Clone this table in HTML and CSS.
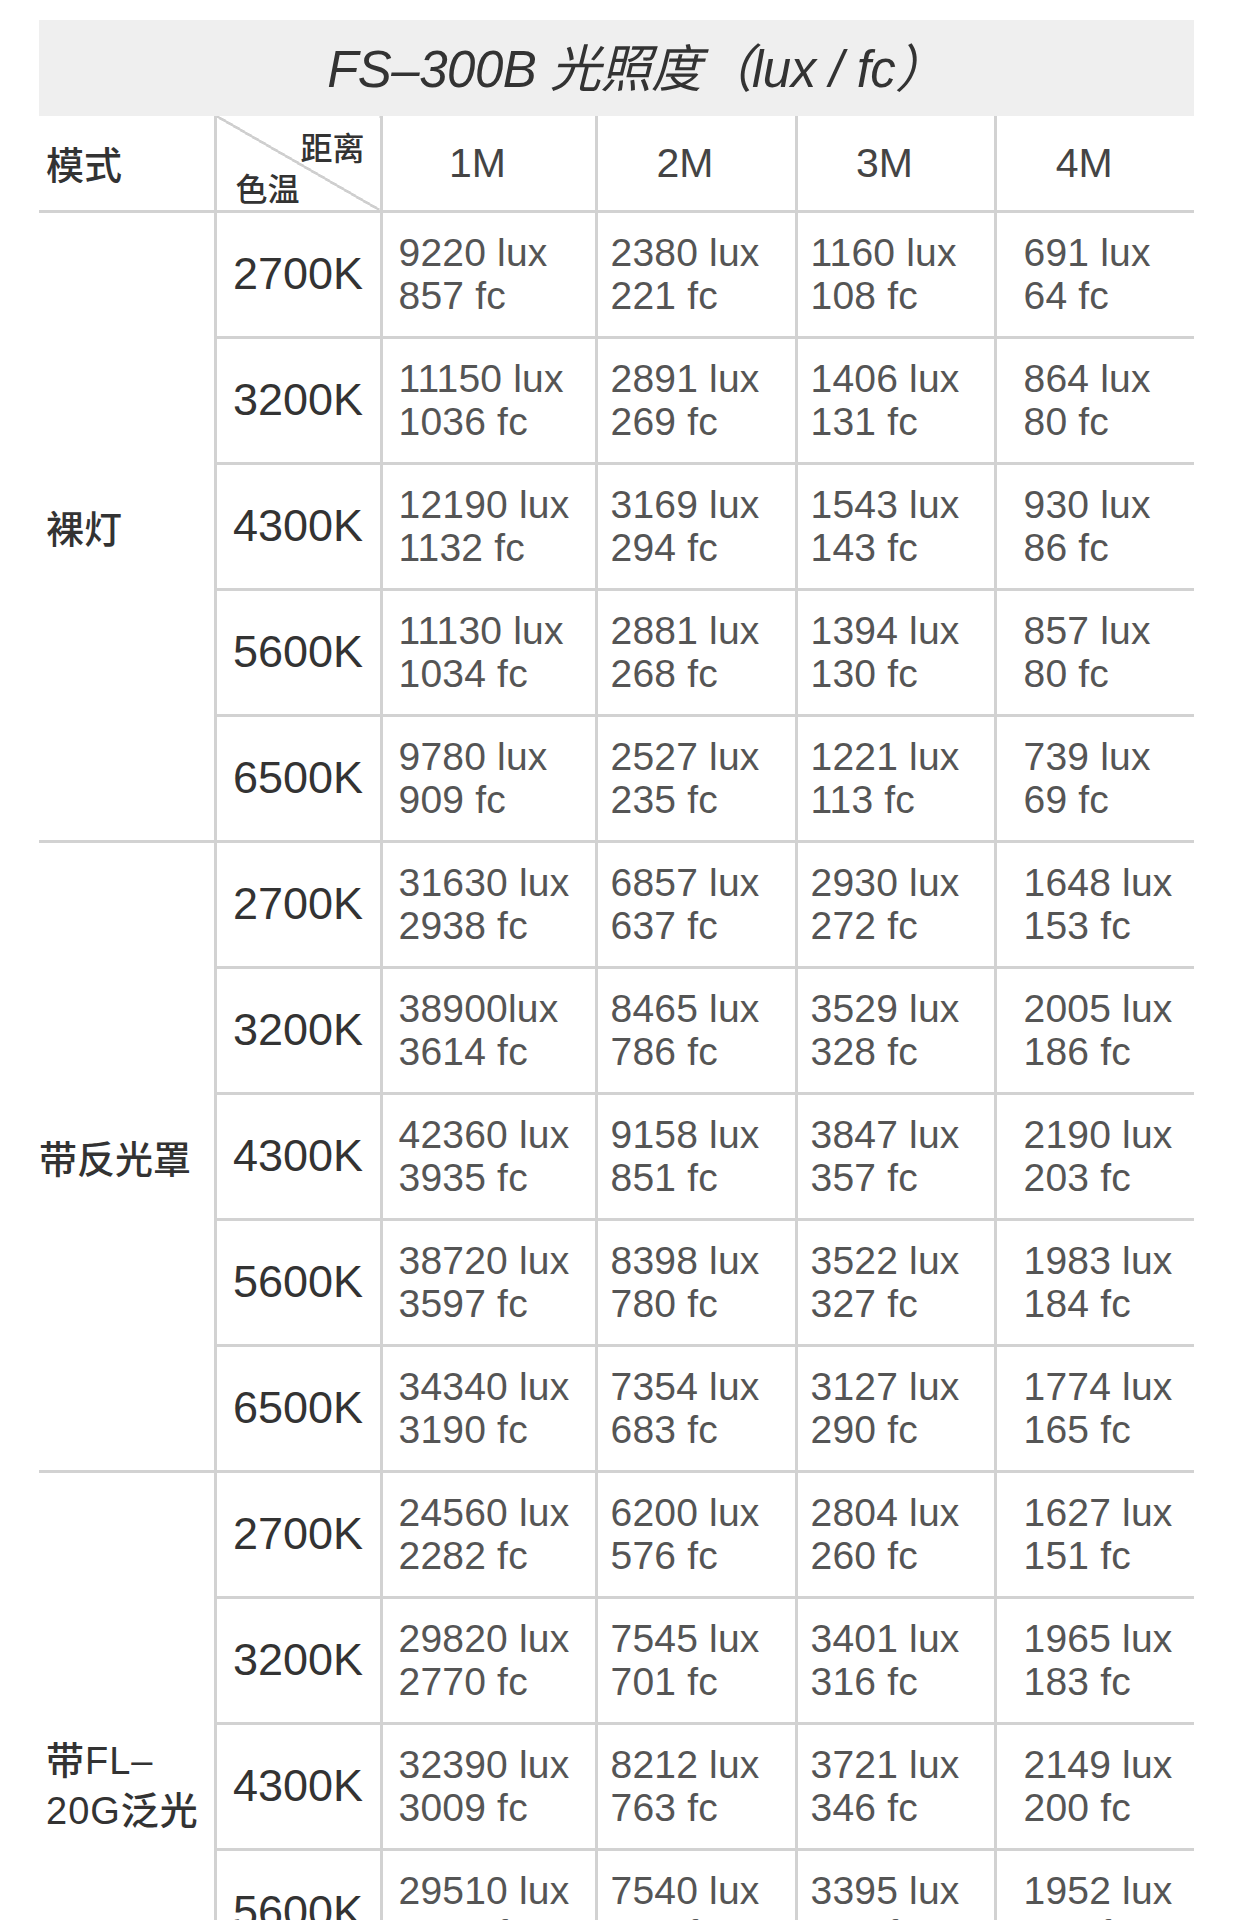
FILE: index.html
```html
<!DOCTYPE html>
<html lang="zh-CN">
<head>
<meta charset="utf-8">
<title>FS-300B 光照度</title>
<link rel="stylesheet" href="styles.css">
</head>
<body>
<div class="sheet">
  <div class="title">FS–300B 光照度（lux / fc）</div>
  <table class="grid">
    <colgroup>
      <col class="w-mode"><col class="w-temp"><col class="w-1"><col class="w-2"><col class="w-3"><col class="w-4">
    </colgroup>
    <thead>
      <tr class="head">
        <th class="mode-h">模式</th>
        <th class="diag"><div class="diag-in"><span class="d-top">距离</span><span class="d-bot">色温</span></div></th>
        <th class="dist">1M</th>
        <th class="dist">2M</th>
        <th class="dist">3M</th>
        <th class="dist">4M</th>
      </tr>
    </thead>
    <tbody>
      <tr class="r">
        <td class="mode" rowspan="5">裸灯</td>
        <td class="temp">2700K</td>
        <td class="v">9220 lux<br>857 fc</td>
        <td class="v">2380 lux<br>221 fc</td>
        <td class="v">1160 lux<br>108 fc</td>
        <td class="v">691 lux<br>64 fc</td>
      </tr>
      <tr class="r">
        <td class="temp">3200K</td>
        <td class="v">11150 lux<br>1036 fc</td>
        <td class="v">2891 lux<br>269 fc</td>
        <td class="v">1406 lux<br>131 fc</td>
        <td class="v">864 lux<br>80 fc</td>
      </tr>
      <tr class="r">
        <td class="temp">4300K</td>
        <td class="v">12190 lux<br>1132 fc</td>
        <td class="v">3169 lux<br>294 fc</td>
        <td class="v">1543 lux<br>143 fc</td>
        <td class="v">930 lux<br>86 fc</td>
      </tr>
      <tr class="r">
        <td class="temp">5600K</td>
        <td class="v">11130 lux<br>1034 fc</td>
        <td class="v">2881 lux<br>268 fc</td>
        <td class="v">1394 lux<br>130 fc</td>
        <td class="v">857 lux<br>80 fc</td>
      </tr>
      <tr class="r">
        <td class="temp">6500K</td>
        <td class="v">9780 lux<br>909 fc</td>
        <td class="v">2527 lux<br>235 fc</td>
        <td class="v">1221 lux<br>113 fc</td>
        <td class="v">739 lux<br>69 fc</td>
      </tr>

      <tr class="r">
        <td class="mode mode-wide" rowspan="5">带反光罩</td>
        <td class="temp">2700K</td>
        <td class="v">31630 lux<br>2938 fc</td>
        <td class="v">6857 lux<br>637 fc</td>
        <td class="v">2930 lux<br>272 fc</td>
        <td class="v">1648 lux<br>153 fc</td>
      </tr>
      <tr class="r">
        <td class="temp">3200K</td>
        <td class="v">38900lux<br>3614 fc</td>
        <td class="v">8465 lux<br>786 fc</td>
        <td class="v">3529 lux<br>328 fc</td>
        <td class="v">2005 lux<br>186 fc</td>
      </tr>
      <tr class="r">
        <td class="temp">4300K</td>
        <td class="v">42360 lux<br>3935 fc</td>
        <td class="v">9158 lux<br>851 fc</td>
        <td class="v">3847 lux<br>357 fc</td>
        <td class="v">2190 lux<br>203 fc</td>
      </tr>
      <tr class="r">
        <td class="temp">5600K</td>
        <td class="v">38720 lux<br>3597 fc</td>
        <td class="v">8398 lux<br>780 fc</td>
        <td class="v">3522 lux<br>327 fc</td>
        <td class="v">1983 lux<br>184 fc</td>
      </tr>
      <tr class="r">
        <td class="temp">6500K</td>
        <td class="v">34340 lux<br>3190 fc</td>
        <td class="v">7354 lux<br>683 fc</td>
        <td class="v">3127 lux<br>290 fc</td>
        <td class="v">1774 lux<br>165 fc</td>
      </tr>

      <tr class="r">
        <td class="mode mode-two" rowspan="5">带FL–<br>20G泛光</td>
        <td class="temp">2700K</td>
        <td class="v">24560 lux<br>2282 fc</td>
        <td class="v">6200 lux<br>576 fc</td>
        <td class="v">2804 lux<br>260 fc</td>
        <td class="v">1627 lux<br>151 fc</td>
      </tr>
      <tr class="r">
        <td class="temp">3200K</td>
        <td class="v">29820 lux<br>2770 fc</td>
        <td class="v">7545 lux<br>701 fc</td>
        <td class="v">3401 lux<br>316 fc</td>
        <td class="v">1965 lux<br>183 fc</td>
      </tr>
      <tr class="r">
        <td class="temp">4300K</td>
        <td class="v">32390 lux<br>3009 fc</td>
        <td class="v">8212 lux<br>763 fc</td>
        <td class="v">3721 lux<br>346 fc</td>
        <td class="v">2149 lux<br>200 fc</td>
      </tr>
      <tr class="r">
        <td class="temp">5600K</td>
        <td class="v">29510 lux<br>2742 fc</td>
        <td class="v">7540 lux<br>700 fc</td>
        <td class="v">3395 lux<br>315 fc</td>
        <td class="v">1952 lux<br>181 fc</td>
      </tr>
      <tr class="r">
        <td class="temp">6500K</td>
        <td class="v"></td>
        <td class="v"></td>
        <td class="v"></td>
        <td class="v"></td>
      </tr>
    </tbody>
  </table>
</div>
</body>
</html>
```

FILE: styles.css
```css
html, body {
  margin: 0;
  padding: 0;
  background: #ffffff;
}

body {
  font-family: "Liberation Sans", Arial, "Noto Sans CJK SC", sans-serif;
  color: #333333;
}

.sheet {
  width: 1155px;
  margin: 0 0 0 39px;
  padding-top: 20px;
}

.title {
  height: 96px;
  background: #efefef;
  display: flex;
  align-items: center;
  justify-content: center;
  padding: 0 0 6px 40px;
  box-sizing: border-box;
  font-size: 51px;
  font-style: italic;
  color: #333333;
  letter-spacing: -0.5px;
}

.grid {
  width: 1155px;
  border-collapse: collapse;
  table-layout: fixed;
}

.w-mode { width: 176px; }
.w-temp { width: 166px; }
.w-1 { width: 215px; }
.w-2 { width: 200px; }
.w-3 { width: 199px; }
.w-4 { width: 199px; }

.grid th,
.grid td {
  padding: 0;
  border: 3px solid #d2d2d2;
  font-weight: normal;
}

.grid tr > :first-child { border-left: none; }
.grid tr > :last-child { border-right: none; }
.grid thead th { border-top: none; }

.head { height: 95px; }
.r { height: 126px; }

.grid .mode-h {
  text-align: left;
  padding-left: 7px;
  font-family: "Noto Sans CJK SC", sans-serif;
  font-size: 38px;
  font-weight: 500;
  color: #333333;
}

.diag {
  background: linear-gradient(to top right,
    transparent calc(50% - 1.3px),
    #cfcfcf calc(50% - 1.3px),
    #cfcfcf calc(50% + 1.3px),
    transparent calc(50% + 1.3px));
  vertical-align: top;
}

.diag-in {
  display: flex;
  flex-direction: column;
  gap: 5px;
  padding: 12px 15px 0 19px;
  font-family: "Noto Sans CJK SC", sans-serif;
  font-size: 32px;
  line-height: 36px;
  font-weight: 500;
  color: #333333;
}

.d-top { align-self: flex-end; }
.d-bot { align-self: flex-start; }

.grid .dist {
  text-align: center;
  font-size: 41px;
  color: #444444;
  padding: 2px 22px 0 0;
}

.grid .mode {
  text-align: left;
  vertical-align: middle;
  padding-left: 7px;
  font-family: "Liberation Sans", "Noto Sans CJK SC", sans-serif;
  font-size: 38px;
  font-weight: 500;
  color: #333333;
  border-left: none;
}

.grid .mode-wide { padding-left: 0; }
.grid .mode-two { line-height: 50px; letter-spacing: 1px; }

.grid .temp {
  text-align: center;
  font-size: 45px;
  color: #333333;
}

.grid td.v {
  text-align: left;
  vertical-align: middle;
  padding-left: 13px;
  font-size: 39px;
  line-height: 43px;
  letter-spacing: 0.2px;
  color: #555555;
  white-space: nowrap;
}

.grid td.v:nth-last-child(4) { padding-left: 16px; }
.grid td.v:last-child { padding-left: 27px; }
```
